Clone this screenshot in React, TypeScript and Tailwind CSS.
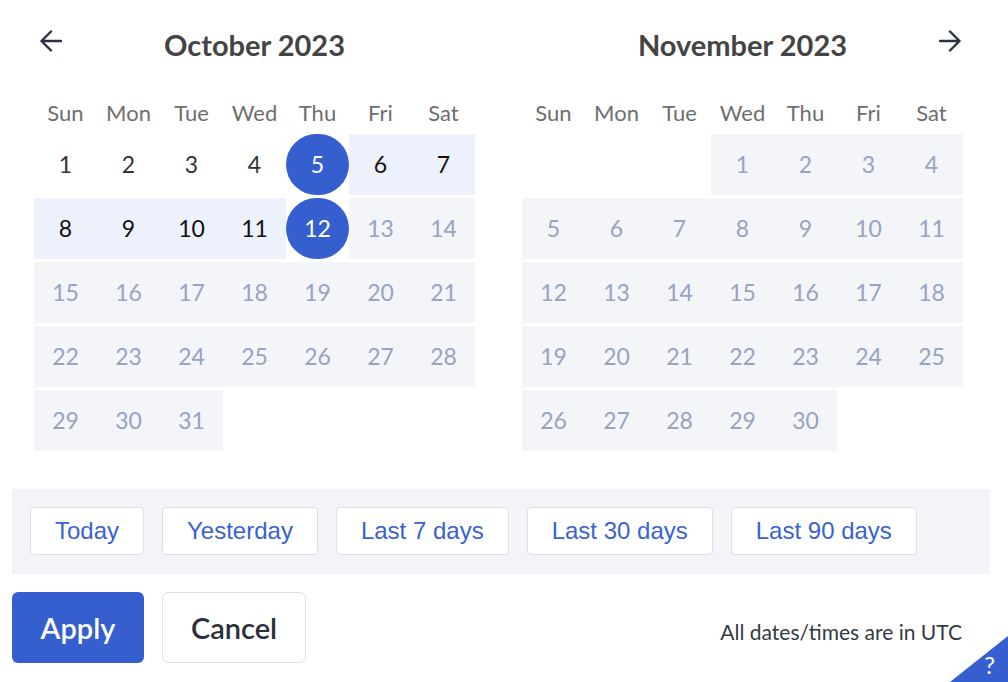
type DayKind = 'empty' | 'plain' | 'range' | 'selected' | 'disabled'

interface Day {
  label?: number
  kind: DayKind
}

const WEEKDAYS = ['Sun', 'Mon', 'Tue', 'Wed', 'Thu', 'Fri', 'Sat']

function buildMonth(offset: number, total: number, kindOf: (d: number) => DayKind) {
  const cells: Day[] = []
  for (let i = 0; i < offset; i++) cells.push({ kind: 'empty' })
  for (let d = 1; d <= total; d++) cells.push({ label: d, kind: kindOf(d) })
  while (cells.length % 7 !== 0) cells.push({ kind: 'empty' })
  return cells
}

const october = buildMonth(0, 31, (d) => {
  if (d === 5 || d === 12) return 'selected'
  if (d > 5 && d < 12) return 'range'
  if (d < 5) return 'plain'
  return 'disabled'
})

const november = buildMonth(3, 30, () => 'disabled')

const PRESETS = ['Today', 'Yesterday', 'Last 7 days', 'Last 30 days', 'Last 90 days']

function NavArrow({ direction }: { direction: 'prev' | 'next' }) {
  const d =
    direction === 'prev'
      ? 'M21 11H1.5 M11 1.5L1.5 11L11 20.5'
      : 'M1 11H20.5 M11 1.5L20.5 11L11 20.5'
  return (
    <svg width="22" height="22" viewBox="0 0 22 22" fill="none" className="-mt-[8px]">
      <path d={d} stroke="#2a3142" strokeWidth="2.4" strokeLinecap="round" strokeLinejoin="round" />
    </svg>
  )
}

function DayCell({ day }: { day: Day }) {
  if (day.kind === 'empty') return <div className="h-[61px]" />

  if (day.kind === 'selected') {
    return (
      <div className="flex h-[61px] items-center justify-center bg-white">
        <div className="flex h-[61px] w-[63px] items-center justify-center rounded-full bg-[#355fcf] text-[23px] text-white">
          {day.label}
        </div>
      </div>
    )
  }

  const styles: Record<string, string> = {
    plain: 'bg-white text-[#333333]',
    range: 'bg-[#edf1fc] text-[#111111]',
    disabled: 'bg-[#f3f5f9] text-[#98a3bd]',
  }

  return (
    <div
      className={`flex h-[61px] items-center justify-center text-[23px] ${styles[day.kind]}`}
    >
      {day.label}
    </div>
  )
}

function Month({
  title,
  days,
  nav,
}: {
  title: string
  days: Day[]
  nav: 'prev' | 'next'
}) {
  return (
    <div className="w-[441px]">
      <div className="grid h-[90px] grid-cols-[1fr_auto_1fr] items-center">
        <div className="pl-[6px]">{nav === 'prev' && <NavArrow direction="prev" />}</div>
        <h2 className="text-[29px] font-bold text-[#444444]">{title}</h2>
        <div className="flex justify-end pr-[2px]">
          {nav === 'next' && <NavArrow direction="next" />}
        </div>
      </div>

      <div className="grid h-[44px] grid-cols-7 items-center">
        {WEEKDAYS.map((w) => (
          <span key={w} className="text-center text-[22px] text-[#6e6e6e]">
            {w}
          </span>
        ))}
      </div>

      <div className="grid grid-cols-7 gap-y-[3px]">
        {days.map((day, i) => (
          <DayCell key={i} day={day} />
        ))}
      </div>
    </div>
  )
}

export default function App() {
  return (
    <div
      className="relative h-[682px] w-[1008px] overflow-hidden bg-white"
      style={{ fontFamily: '"Lato", "Open Sans", sans-serif' }}
    >
      <div className="flex gap-[47px] pl-[34px]">
        <Month title="October 2023" days={october} nav="prev" />
        <Month title="November 2023" days={november} nav="next" />
      </div>

      <div className="mx-[12px] mt-[38px] flex w-[978px] gap-[18px] bg-[#f3f4f8] px-[18px] pb-[19px] pt-[18px]">
        {PRESETS.map((p) => (
          <button
            key={p}
            className="h-[48px] rounded-[4px] border border-[#dcdfe6] bg-white px-[24px] text-[24px] text-[#3a62cf]"
            style={{ fontFamily: '"Liberation Sans", Arial, sans-serif' }}
          >
            {p}
          </button>
        ))}
      </div>

      <div className="mx-[12px] mt-[18px] flex items-center">
        <button className="h-[71px] w-[132px] rounded-[6px] bg-[#355fcf] text-[29px] font-semibold text-white">
          Apply
        </button>
        <button className="ml-[18px] h-[71px] w-[144px] rounded-[6px] border border-[#dcdfe6] bg-white text-[29px] font-semibold text-[#2a2f3a]">
          Cancel
        </button>
        <span className="ml-auto mr-[34px] mt-[8px] text-[21px] text-[#333a44]">
          All dates/times are in UTC
        </span>
      </div>

      <div className="absolute bottom-0 right-0 h-[46px] w-[58px]">
        <svg viewBox="0 0 58 46" className="absolute inset-0 h-full w-full">
          <polygon points="0,46 58,0 58,46" fill="#355fcf" />
        </svg>
        <span className="absolute bottom-[5px] right-[13px] text-[24px] leading-none text-white">
          ?
        </span>
      </div>
    </div>
  )
}
